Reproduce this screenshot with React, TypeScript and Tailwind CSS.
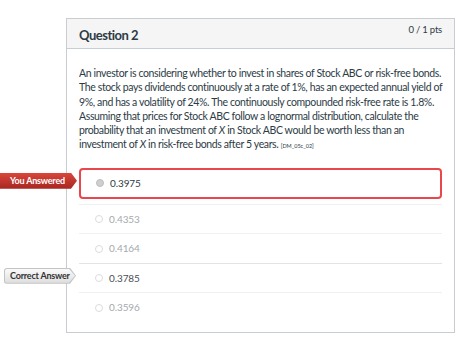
export default function App() {
  const answers = [
    { value: "0.3975", state: "chosen" },
    { value: "0.4353", state: "plain" },
    { value: "0.4164", state: "plain" },
    { value: "0.3785", state: "correct" },
    { value: "0.3596", state: "plain" },
  ];

  return (
    <div
      className="min-h-[343px] w-[474px] bg-white pt-[18px] pl-[66px]"
      style={{ fontFamily: "Lato, 'Open Sans', sans-serif" }}
    >
      <div className="w-[389px] h-[315px] border border-[#c7cdd1] text-[#2d3b45]">
        <div className="h-[30px] bg-[#f5f5f5] border-b border-[#c7cdd1] flex justify-between px-[12px]">
          <h2 className="self-center mt-[4px] text-[13px] font-bold leading-none tracking-[-0.5px]">
            Question 2
          </h2>
          <span className="mt-[6px] text-[9.5px] leading-none tracking-[-0.2px]">0 / 1 pts</span>
        </div>

        <div className="px-[12px] pt-[17px]">
          <p className="mr-[-10px] text-[10.5px] leading-[14.3px] tracking-[-0.37px]">
            An investor is considering whether to invest in shares of Stock ABC or risk-free bonds.
            <br />
            The stock pays dividends continuously at a rate of 1%, has an expected annual yield of
            <br />
            9%, and has a volatility of 24%. The continuously compounded risk-free rate is 1.8%.
            <br />
            Assuming that prices for Stock ABC follow a lognormal distribution, calculate the
            <br />
            probability that an investment of <i>X</i> in Stock ABC would be worth less than an
            <br />
            investment of <i>X</i> in risk-free bonds after 5 years.{" "}
            <span className="text-[5.5px] tracking-normal">[DM_05c_02]</span>
          </p>

          <div className="mt-[14px] flex flex-col">
            {answers.map((a) => (
              <div
                key={a.value}
                className={
                  a.state === "chosen"
                    ? "relative h-[31px] mb-[5px] rounded-[4px] border-2 border-[#e9474c] flex items-center gap-[6px] pl-[15px]"
                    : a.state === "correct"
                    ? "relative h-[29.5px] border-t border-[#e1e3e5] flex items-center gap-[6px] pl-[16px]"
                    : "relative h-[29.5px] border-t border-[#eef0f1] flex items-center gap-[6px] pl-[16px]"
                }
              >
                {a.state === "chosen" && (
                  <div className="absolute left-[-81px] top-[3px] h-[16px] w-[77px] bg-gradient-to-b from-[#d9463b] to-[#a72621] [clip-path:polygon(0_0,calc(100%-6px)_0,100%_50%,calc(100%-6px)_100%,0_100%)] flex items-center pl-[10px] whitespace-nowrap text-[9px] font-bold tracking-[-0.2px] text-white">
                    You Answered
                  </div>
                )}
                {a.state === "correct" && (
                  <div className="absolute left-[-75px] top-[4px] h-[16px] w-[72px] bg-[#c4c4c4] rounded-l-[3px] [clip-path:polygon(0_0,calc(100%-6px)_0,100%_50%,calc(100%-6px)_100%,0_100%)]">
                    <div className="absolute inset-[1px] rounded-l-[2px] bg-gradient-to-b from-[#fafafa] to-[#dedede] [clip-path:polygon(0_0,calc(100%-6px)_0,100%_50%,calc(100%-6px)_100%,0_100%)] flex items-center pl-[5px] whitespace-nowrap text-[9px] font-bold tracking-[-0.2px] text-[#333]">
                      Correct Answer
                    </div>
                  </div>
                )}
                <span
                  className={
                    a.state === "chosen"
                      ? "w-[8px] h-[8px] rounded-full bg-[#cfcfcf] border border-[#bdbdbd]"
                      : "w-[8px] h-[8px] rounded-full border border-[#dcdcdc] bg-white"
                  }
                />
                <span
                  className={
                    "text-[10px] tracking-[-0.1px] " +
                    (a.state === "chosen"
                      ? "text-[#2d3b45]"
                      : a.state === "correct"
                      ? "text-[#4a4f55]"
                      : "text-[#a5a9ad]")
                  }
                >
                  {a.value}
                </span>
              </div>
            ))}
          </div>
        </div>
      </div>
    </div>
  );
}
